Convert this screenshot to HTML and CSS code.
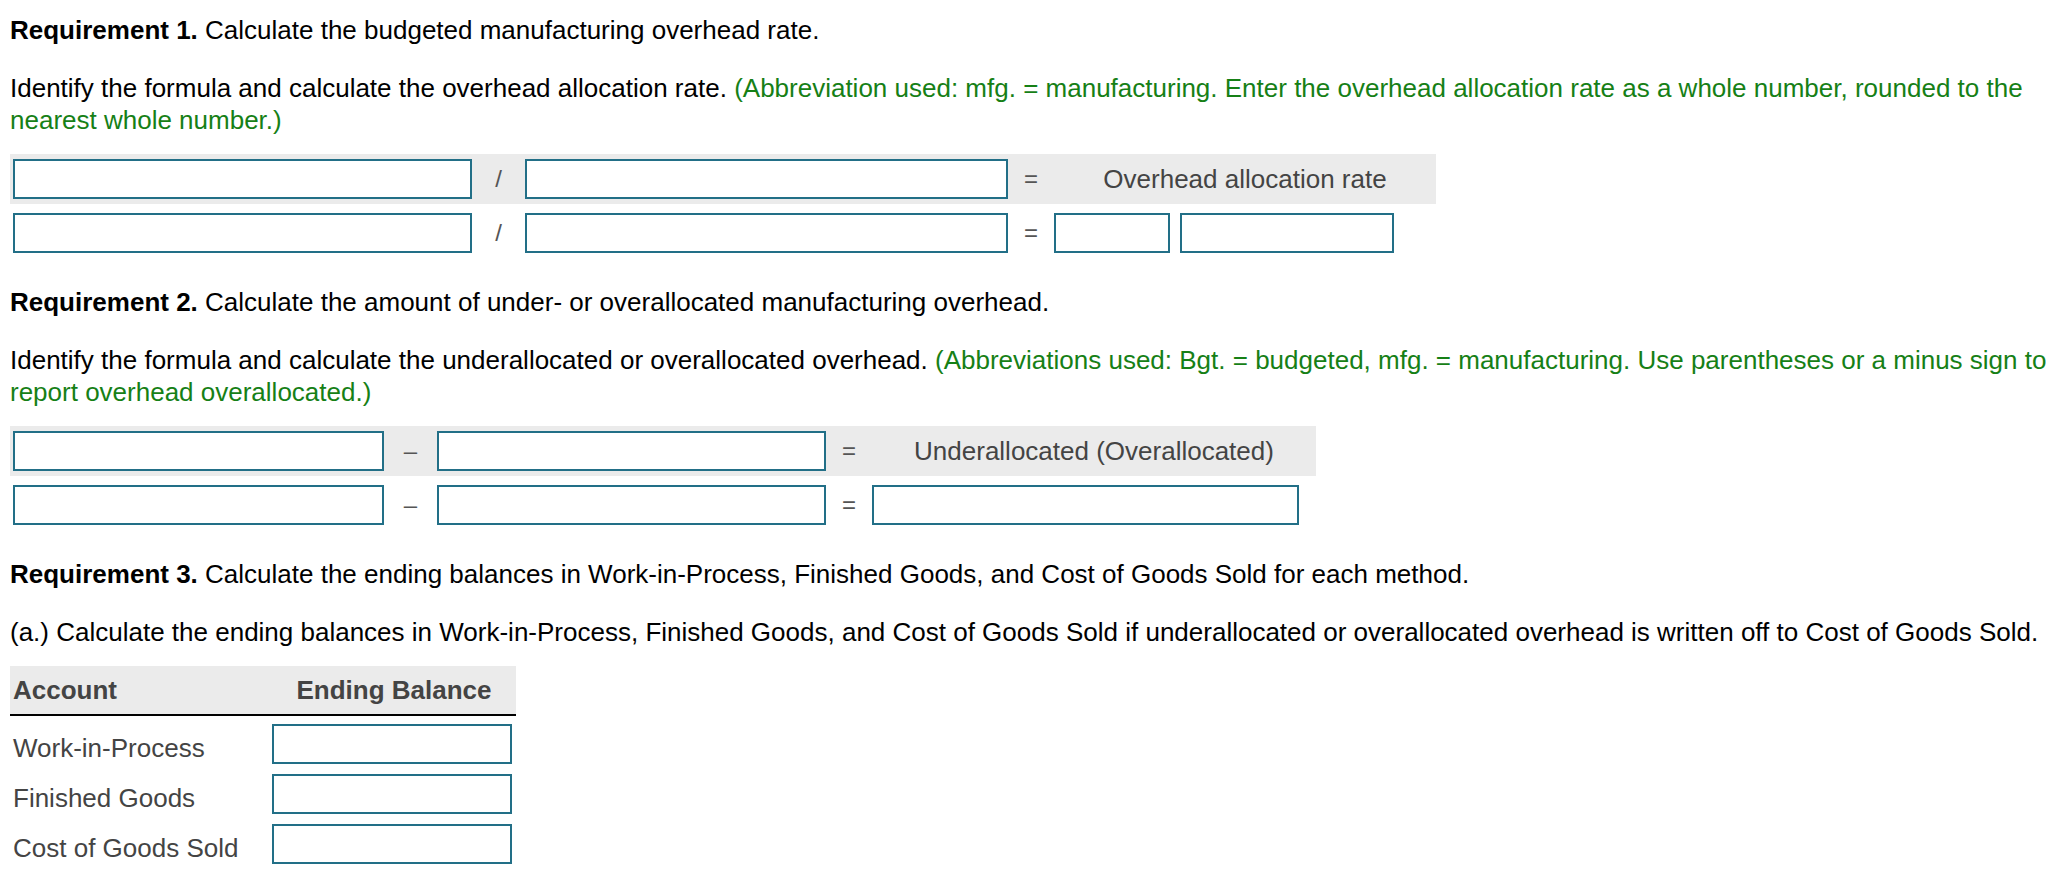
FILE: index.html
```html
<!DOCTYPE html>
<html>
<head>
<meta charset="utf-8">
<link rel="stylesheet" href="styles.css">
</head>
<body>
<div class="page">
  <p class="req"><b>Requirement 1.</b> Calculate the budgeted manufacturing overhead rate.</p>
  <p class="instr">Identify the formula and calculate the overhead allocation rate. <span class="hint">(Abbreviation used: mfg. = manufacturing. Enter the overhead allocation rate as a whole number, rounded to the nearest whole number.)</span></p>
  <table class="formula f1">
    <tr class="head">
      <td class="c1"><span class="box"></span></td>
      <td class="op op1">/</td>
      <td class="c2"><span class="box"></span></td>
      <td class="op op2">=</td>
      <td class="lbl">Overhead allocation rate</td>
    </tr>
    <tr class="inputs">
      <td class="c1"><span class="box"></span></td>
      <td class="op op1">/</td>
      <td class="c2"><span class="box"></span></td>
      <td class="op op2">=</td>
      <td class="res"><span class="box small"></span><span class="box mid"></span></td>
    </tr>
  </table>

  <p class="req"><b>Requirement 2.</b> Calculate the amount of under- or overallocated manufacturing overhead.</p>
  <p class="instr">Identify the formula and calculate the underallocated or overallocated overhead. <span class="hint">(Abbreviations used: Bgt. = budgeted, mfg. = manufacturing. Use parentheses or a minus sign to report overhead overallocated.)</span></p>
  <table class="formula f2">
    <tr class="head">
      <td class="c1"><span class="box"></span></td>
      <td class="op op1">&ndash;</td>
      <td class="c2"><span class="box"></span></td>
      <td class="op op2">=</td>
      <td class="lbl">Underallocated (Overallocated)</td>
    </tr>
    <tr class="inputs">
      <td class="c1"><span class="box"></span></td>
      <td class="op op1">&ndash;</td>
      <td class="c2"><span class="box"></span></td>
      <td class="op op2">=</td>
      <td class="res"><span class="box wide"></span></td>
    </tr>
  </table>

  <p class="req"><b>Requirement 3.</b> Calculate the ending balances in Work-in-Process, Finished Goods, and Cost of Goods Sold for each method.</p>
  <p class="instr">(a.) Calculate the ending balances in Work-in-Process, Finished Goods, and Cost of Goods Sold if underallocated or overallocated overhead is written off to Cost of Goods Sold.</p>
  <table class="balances">
    <tr class="thead">
      <th class="acct">Account</th>
      <th class="bal">Ending Balance</th>
    </tr>
    <tr><td class="acct">Work-in-Process</td><td class="bal"><span class="box"></span></td></tr>
    <tr><td class="acct">Finished Goods</td><td class="bal"><span class="box"></span></td></tr>
    <tr><td class="acct">Cost of Goods Sold</td><td class="bal"><span class="box"></span></td></tr>
  </table>
</div>
</body>
</html>
```

FILE: styles.css
```css
html, body {
  margin: 0;
  padding: 0;
  background: #ffffff;
}
.page {
  padding: 14px 10px 0 10px;
  font-family: "Liberation Sans", Arial, sans-serif;
  font-size: 26px;
  color: #000;
}
p {
  margin: 0;
  line-height: 32px;
}
.req {
  margin-bottom: 26px;
}
.instr {
  margin-bottom: 18px;
}
.hint {
  color: #168016;
}
.box {
  display: inline-block;
  box-sizing: border-box;
  height: 40px;
  border: 2px solid #226f87;
  background: #fff;
  vertical-align: middle;
}
.formula {
  border-collapse: collapse;
  margin-bottom: 25px;
}
.formula td {
  padding: 0;
  vertical-align: middle;
}
.formula .head td {
  background: #ebebeb;
  height: 50px;
}
.formula .inputs td {
  height: 57px;
}
.formula .c1 {
  padding-left: 3px;
}
.formula .box {
  width: 100%;
  display: block;
}
.formula .op {
  text-align: center;
  color: #555;
  font-size: 24px;
}
.formula .lbl {
  color: #444;
  text-align: center;
}
.formula .res {
  white-space: nowrap;
}
.formula .res .box {
  display: inline-block;
  vertical-align: middle;
}
.f1 .c1 { width: 459px; }
.f1 .c2 { width: 483px; }
.f1 .op1 { width: 53px; }
.f1 .op2 { width: 46px; }
.f1 .lbl { width: 382px; }
.f1 .res .small { width: 116px; margin-right: 10px; }
.f1 .res .mid { width: 214px; }
.f2 .c1 { width: 371px; }
.f2 .c2 { width: 389px; }
.f2 .op1 { width: 53px; }
.f2 .op2 { width: 46px; }
.f2 .lbl { width: 444px; }
.f2 .res .wide { width: 427px; }
.balances {
  margin-top: 16px;
  border-collapse: collapse;
  color: #444;
}
.balances th {
  background: #ebebeb;
  font-weight: bold;
  height: 48px;
  padding: 0;
  border-bottom: 2px solid #000;
  vertical-align: middle;
}
.balances th.acct { text-align: left; padding-left: 3px; width: 259px; }
.balances th.bal { text-align: center; width: 244px; }
.balances td {
  vertical-align: middle;
}
.balances td.bal { padding: 8px 0 2px 0; height: 40px; }
.balances td.acct { padding: 16px 0 2px 3px; height: 32px; }
.balances td.bal .box { width: 240px; display: block; }
```
